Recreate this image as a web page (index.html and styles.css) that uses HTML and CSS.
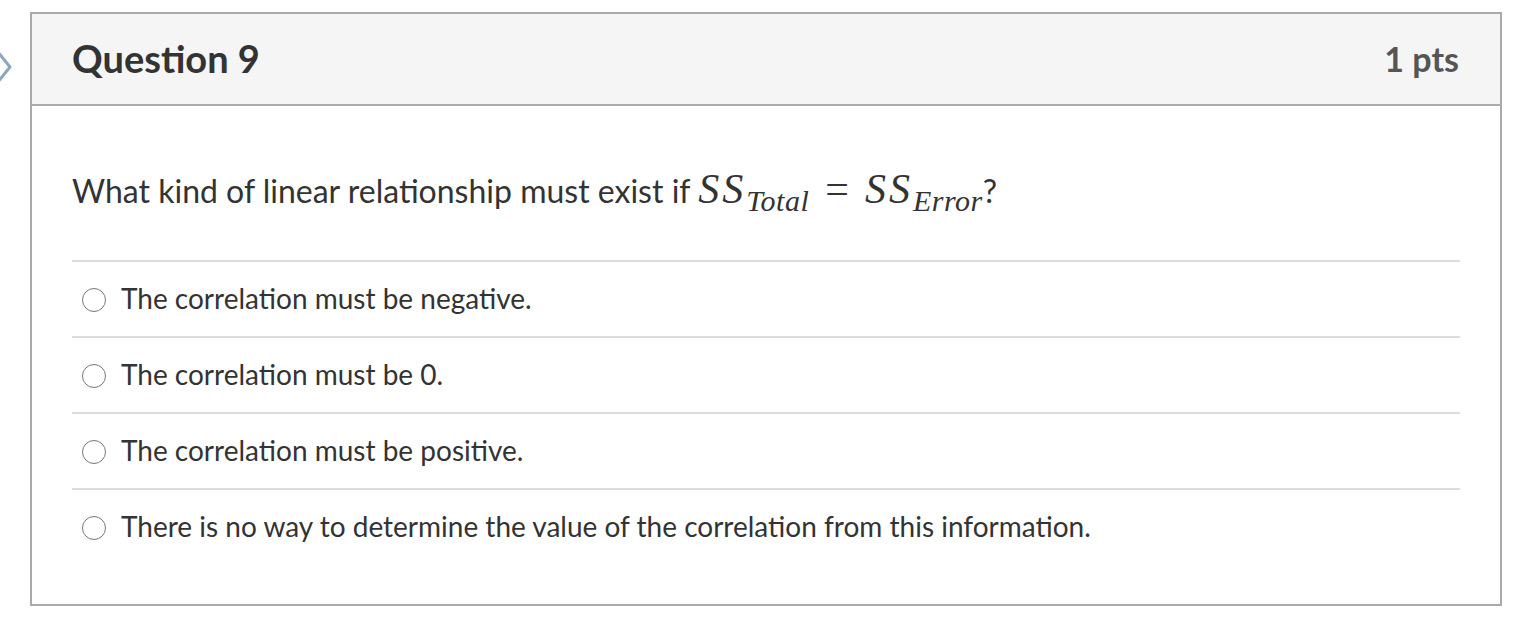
FILE: index.html
```html
<!DOCTYPE html>
<html>
<head>
<meta charset="utf-8">
<link rel="stylesheet" href="styles.css">
</head>
<body>
<div class="page">
  <div class="nav">
    <svg class="chevron" width="30" height="40" viewBox="0 0 30 40">
      <polyline points="-3,1 10,17 -3,33" fill="none" stroke="#8ea6bd" stroke-width="3" stroke-linejoin="round"/>
    </svg>
  </div>
  <div class="card">
    <div class="card-header">
      <span class="q-title">Question 9</span>
      <span class="q-pts">1 pts</span>
    </div>
    <div class="card-body">
      <div class="q-text">What kind of linear relationship must exist if <span class="math"><span class="mi">SS</span><sub class="msub">Total</sub><span class="meq">=</span><span class="mi">SS</span><sub class="msub last">Error</sub></span>?</div>
      <div class="answers">
        <label class="answer"><span class="radio"></span><span class="a-text">The correlation must be negative.</span></label>
        <label class="answer"><span class="radio"></span><span class="a-text">The correlation must be 0.</span></label>
        <label class="answer"><span class="radio"></span><span class="a-text">The correlation must be positive.</span></label>
        <label class="answer"><span class="radio"></span><span class="a-text">There is no way to determine the value of the correlation from this information.</span></label>
      </div>
    </div>
  </div>
</div>
</body>
</html>
```

FILE: styles.css
```css
html, body {
  margin: 0;
  padding: 0;
  background: #ffffff;
}
body {
  font-family: Lato, "Open Sans", sans-serif;
  color: #2d3b45;
}
.page {
  display: flex;
  align-items: flex-start;
  padding-top: 12px;
}
.nav {
  width: 30px;
  flex: none;
  padding-top: 38px;
}
.chevron {
  display: block;
}
.card {
  width: 1468px;
  border: 2px solid #aaaaaa;
  background: #fff;
}
.card-header {
  height: 90px;
  background: #f5f5f5;
  border-bottom: 2px solid #aaaaaa;
  display: flex;
  align-items: center;
  justify-content: space-between;
  padding: 0 41px 0 40px;
}
.q-title {
  font-weight: 700;
  font-size: 38px;
  color: #333333;
  position: relative;
  top: -1px;
}
.q-pts {
  font-weight: 700;
  font-size: 34px;
  color: #555555;
  position: relative;
  top: -1px;
}
.card-body {
  padding: 0 40px 40px 40px;
}
.q-text {
  font-size: 32px;
  color: #333333;
  line-height: 34px;
  padding: 66px 0 50px 0;
}
.math {
  font-family: "Liberation Serif", "DejaVu Serif", serif;
  font-style: italic;
  font-size: 42px;
  white-space: nowrap;
}
.mi {
  font-style: italic;
  letter-spacing: 3px;
}
.msub {
  font-size: 30px;
  vertical-align: baseline;
  position: relative;
  top: 8px;
  letter-spacing: 0.5px;
}
.msub.last {
  margin-right: 0;
}
.meq {
  font-style: normal;
  margin: 0 16px 0 16px;
}
.answers {
  display: flex;
  flex-direction: column;
}
.answer {
  display: flex;
  align-items: center;
  height: 74px;
  border-top: 2px solid #dddddd;
  padding-left: 10px;
}
.radio {
  width: 22px;
  height: 22px;
  border: 1.6px solid #777777;
  border-radius: 50%;
  flex: none;
  margin-right: 15px;
  position: relative;
  top: 1px;
}
.a-text {
  font-size: 28px;
  color: #333333;
  position: relative;
  top: -1px;
}
```
